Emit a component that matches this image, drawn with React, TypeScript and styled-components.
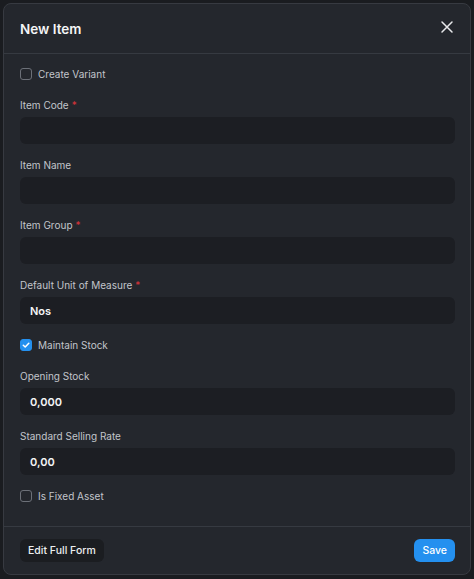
import React from 'react';
import styled, { createGlobalStyle } from 'styled-components';

const GlobalStyle = createGlobalStyle`
    html, body {
        margin: 0;
        padding: 0;
        background: #1a1c20;
        font-family: Inter, "Noto Sans", "Liberation Sans", sans-serif;
        -webkit-font-smoothing: antialiased;
    }
    * {
        box-sizing: border-box;
    }
`;

type Field =
    | { kind: 'check'; label: string; checked?: boolean }
    | { kind: 'input'; label: string; required?: boolean; value?: string };

const fields: Field[] = [
    { kind: 'check', label: 'Create Variant' },
    { kind: 'input', label: 'Item Code', required: true },
    { kind: 'input', label: 'Item Name' },
    { kind: 'input', label: 'Item Group', required: true },
    { kind: 'input', label: 'Default Unit of Measure', required: true, value: 'Nos' },
    { kind: 'check', label: 'Maintain Stock', checked: true },
    { kind: 'input', label: 'Opening Stock', value: '0,000' },
    { kind: 'input', label: 'Standard Selling Rate', value: '0,00' },
    { kind: 'check', label: 'Is Fixed Asset' },
];

const CloseIcon = () => (
    <svg width="16" height="16" viewBox="0 0 16 16" fill="none">
        <path d="M3 3L13 13M13 3L3 13" stroke="#e8e9eb" strokeWidth="1.5" strokeLinecap="round" />
    </svg>
);

const CheckMark = () => (
    <svg width="10" height="10" viewBox="0 0 10 10" fill="none">
        <path d="M2.3 5.2L4.2 7L7.8 3.2" stroke="#fff" strokeWidth="1.5" strokeLinecap="round" strokeLinejoin="round" />
    </svg>
);

export default function App() {
    return (
        <>
            <GlobalStyle />
            <Modal>
                <Header>
                    <Title>New Item</Title>
                    <CloseButton aria-label="Close">
                        <CloseIcon />
                    </CloseButton>
                </Header>
                <Body>
                    {fields.map((f) => f.kind === 'check' ? (
                        <CheckRow key={f.label}>
                            <Box $checked={!!f.checked}>{f.checked && <CheckMark />}</Box>
                            <CheckLabel>{f.label}</CheckLabel>
                        </CheckRow>
                    ) : (
                        <FieldGroup key={f.label}>
                            <Label>
                                {f.label}
                                {f.required && <Required>*</Required>}
                            </Label>
                            <Input>{f.value}</Input>
                        </FieldGroup>
                    ))}
                </Body>
                <Footer>
                    <Button>Edit Full Form</Button>
                    <Button $primary>Save</Button>
                </Footer>
            </Modal>
        </>
    );
}

const Modal = styled.div`
    margin: 3px 0 0 3px;
    width: 468px;
    height: 572px;
    background: #24272d;
    border: 1px solid #373a41;
    border-radius: 8px;
    display: flex;
    flex-direction: column;
`;

const Header = styled.div`
    height: 50px;
    padding: 0 15px 0 16px;
    display: flex;
    align-items: center;
    justify-content: space-between;
    border-bottom: 1px solid #363a41;
`;

const Title = styled.div`
    font-size: 13.5px;
    font-weight: 600;
    color: #f4f5f6;
`;

const CloseButton = styled.div`
    width: 20px;
    height: 20px;
    margin-right: -2px;
    margin-top: -4px;
    display: flex;
    align-items: center;
    justify-content: center;
`;

const Body = styled.div`
    padding: 12px 15px 0 16px;
    display: flex;
    flex-direction: column;
    gap: 13px;
`;

const FieldGroup = styled.div`
    display: flex;
    flex-direction: column;
`;

const Label = styled.div`
    font-size: 10px;
    line-height: 17px;
    color: #c2c5cb;
    margin-bottom: 3px;
`;

const Required = styled.span`
    color: #d9343a;
    margin-left: 3px;
`;

const Input = styled.div`
    height: 27px;
    border-radius: 6px;
    background: #1c1e23;
    padding: 0 10px;
    display: flex;
    align-items: center;
    font-size: 11px;
    font-weight: 600;
    color: #f4f5f6;
`;

const CheckRow = styled.div`
    height: 16px;
    margin-bottom: 2px;
    display: flex;
    align-items: center;
    gap: 6px;
`;

const Box = styled.div<{ $checked: boolean }>`
    width: 12px;
    height: 12px;
    border-radius: 3px;
    border: 1px solid ${(p) => (p.$checked ? '#2490ef' : '#6c7078')};
    background: ${(p) => (p.$checked ? '#2490ef' : 'transparent')};
    display: flex;
    align-items: center;
    justify-content: center;
`;

const CheckLabel = styled.span`
    font-size: 10px;
    color: #c2c5cb;
`;

const Footer = styled.div`
    margin-top: auto;
    height: 48px;
    padding: 0 15px 0 16px;
    border-top: 1px solid #363a41;
    display: flex;
    align-items: center;
    justify-content: space-between;
`;

const Button = styled.div<{ $primary?: boolean }>`
    height: 23px;
    padding: 0 8px;
    border-radius: 6px;
    display: flex;
    align-items: center;
    font-size: 10.5px;
    font-weight: 500;
    color: ${(p) => (p.$primary ? '#ffffff' : '#eceef0')};
    background: ${(p) => (p.$primary ? '#2490ef' : '#1b1d21')};
`;
